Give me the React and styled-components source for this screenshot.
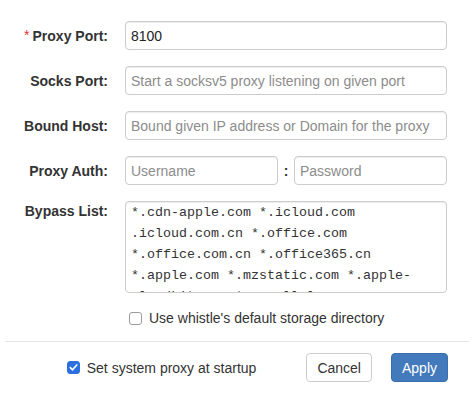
import React, { useState } from 'react';
import styled, { createGlobalStyle } from 'styled-components';

const GlobalStyle = createGlobalStyle`
  html, body {
    margin: 0;
    padding: 0;
    background: #fff;
  }
  body {
    font-family: "Liberation Sans", Arial, Helvetica, sans-serif;
    font-size: 14px;
    color: #333;
  }
  * {
    box-sizing: border-box;
  }
`;

const Dialog = styled.div`
  width: 474px;
  padding-top: 21px;
`;

const Form = styled.div`
  display: flex;
  flex-direction: column;
  gap: 16px;
  padding-right: 27px;
`;

const Row = styled.div`
  display: grid;
  grid-template-columns: 108px 1fr;
  column-gap: 17px;
  align-items: ${({ $top }) => ($top ? 'start' : 'center')};
`;

const Label = styled.label`
  text-align: right;
  font-weight: bold;
  line-height: 20px;
  color: #333;
  white-space: nowrap;
`;

const Required = styled.span`
  color: #d9363e;
  font-weight: normal;
  margin-right: 3px;
  vertical-align: top;
  position: relative;
  top: -1px;
`;

const Input = styled.input`
  width: 100%;
  height: 29px;
  padding: 0 5px;
  border: 1px solid #ccc;
  border-radius: 4px;
  box-shadow: inset 0 1px 1px rgba(0, 0, 0, 0.075);
  font-family: inherit;
  font-size: 14px;
  color: #222;
  outline: none;

  &::placeholder {
    color: #8c8c8c;
  }
`;

const AuthGroup = styled.div`
  display: grid;
  grid-template-columns: 1fr 16px 1fr;
  align-items: center;
`;

const Colon = styled.span`
  text-align: center;
  font-weight: bold;
`;

const Bypass = styled.textarea`
  width: 100%;
  height: 92px;
  margin: 0;
  padding: 0 5px;
  border: 1px solid #ccc;
  border-radius: 4px;
  box-shadow: inset 0 1px 1px rgba(0, 0, 0, 0.075);
  font-family: "Liberation Mono", "Courier New", monospace;
  font-size: 13.33px;
  line-height: 21px;
  color: #333;
  resize: none;
  overflow: auto;
  scrollbar-width: none;
  outline: none;
  display: block;
`;

const CheckLabel = styled.label`
  display: flex;
  align-items: center;
  gap: 7px;
  line-height: 20px;
  color: #333;
  cursor: pointer;
  user-select: none;
`;

const StorageRow = styled.div`
  display: flex;
  padding-left: 129px;
  margin-top: 15px;
`;

const Box = styled.span`
  width: 13px;
  height: 13px;
  border-radius: 3px;
  border: 1px solid ${({ $checked }) => ($checked ? '#2d6fdf' : '#9a9a9a')};
  background: ${({ $checked }) => ($checked ? '#2d6fdf' : '#fff')};
  display: flex;
  align-items: center;
  justify-content: center;
  flex: none;
`;

const Divider = styled.div`
  height: 1px;
  margin: 13px 5px 0;
  background: #e5e5e5;
`;

const Footer = styled.div`
  display: flex;
  align-items: center;
  justify-content: flex-end;
  padding: 11px 26px 0 0;
`;

const StartupCheck = styled(CheckLabel)`
  margin-right: 50px;
`;

const Button = styled.button`
  height: 29px;
  padding: 0 10px;
  margin-left: ${({ $gap }) => $gap || 0}px;
  border-radius: 4px;
  font-family: inherit;
  font-size: 14px;
  line-height: 20px;
  cursor: pointer;
  border: 1px solid ${({ $primary }) => ($primary ? '#3a6fae' : '#ccc')};
  background: ${({ $primary }) => ($primary ? '#427abb' : '#fff')};
  color: ${({ $primary }) => ($primary ? '#fff' : '#333')};
`;

const Checkbox = ({ checked, onChange, children, as: Wrap = CheckLabel }) => (
  <Wrap onClick={() => onChange(!checked)}>
    <Box $checked={checked}>
      {checked && (
        <svg width="9" height="9" viewBox="0 0 10 10">
          <path d="M1.5 5.2 L4 7.6 L8.6 2.2" fill="none" stroke="#fff" strokeWidth="1.8" strokeLinecap="round" strokeLinejoin="round" />
        </svg>
      )}
    </Box>
    {children}
  </Wrap>
);

const bypassList = '*.cdn-apple.com *.icloud.com .icloud.com.cn *.office.com *.office.com.cn *.office365.cn *.apple.com *.mzstatic.com *.apple-cloudkit.com *.parallels.com';

export default function App() {
  const [port, setPort] = useState('8100');
  const [bypass, setBypass] = useState(bypassList);
  const [defaultDir, setDefaultDir] = useState(false);
  const [startup, setStartup] = useState(true);

  return (
    <Dialog>
      <GlobalStyle />
      <Form>
        <Row>
          <Label><Required>*</Required>Proxy Port:</Label>
          <Input value={port} onChange={e => setPort(e.target.value)} />
        </Row>
        <Row>
          <Label>Socks Port:</Label>
          <Input placeholder="Start a socksv5 proxy listening on given port" />
        </Row>
        <Row>
          <Label>Bound Host:</Label>
          <Input placeholder="Bound given IP address or Domain for the proxy" />
        </Row>
        <Row>
          <Label>Proxy Auth:</Label>
          <AuthGroup>
            <Input placeholder="Username" />
            <Colon>:</Colon>
            <Input type="password" placeholder="Password" />
          </AuthGroup>
        </Row>
        <Row $top>
          <Label>Bypass List:</Label>
          <Bypass value={bypass} onChange={e => setBypass(e.target.value)} />
        </Row>
      </Form>
      <StorageRow>
        <Checkbox checked={defaultDir} onChange={setDefaultDir}>
          Use whistle's default storage directory
        </Checkbox>
      </StorageRow>
      <Divider />
      <Footer>
        <Checkbox as={StartupCheck} checked={startup} onChange={setStartup}>
          Set system proxy at startup
        </Checkbox>
        <Button>Cancel</Button>
        <Button $primary $gap={19}>Apply</Button>
      </Footer>
    </Dialog>
  );
}
